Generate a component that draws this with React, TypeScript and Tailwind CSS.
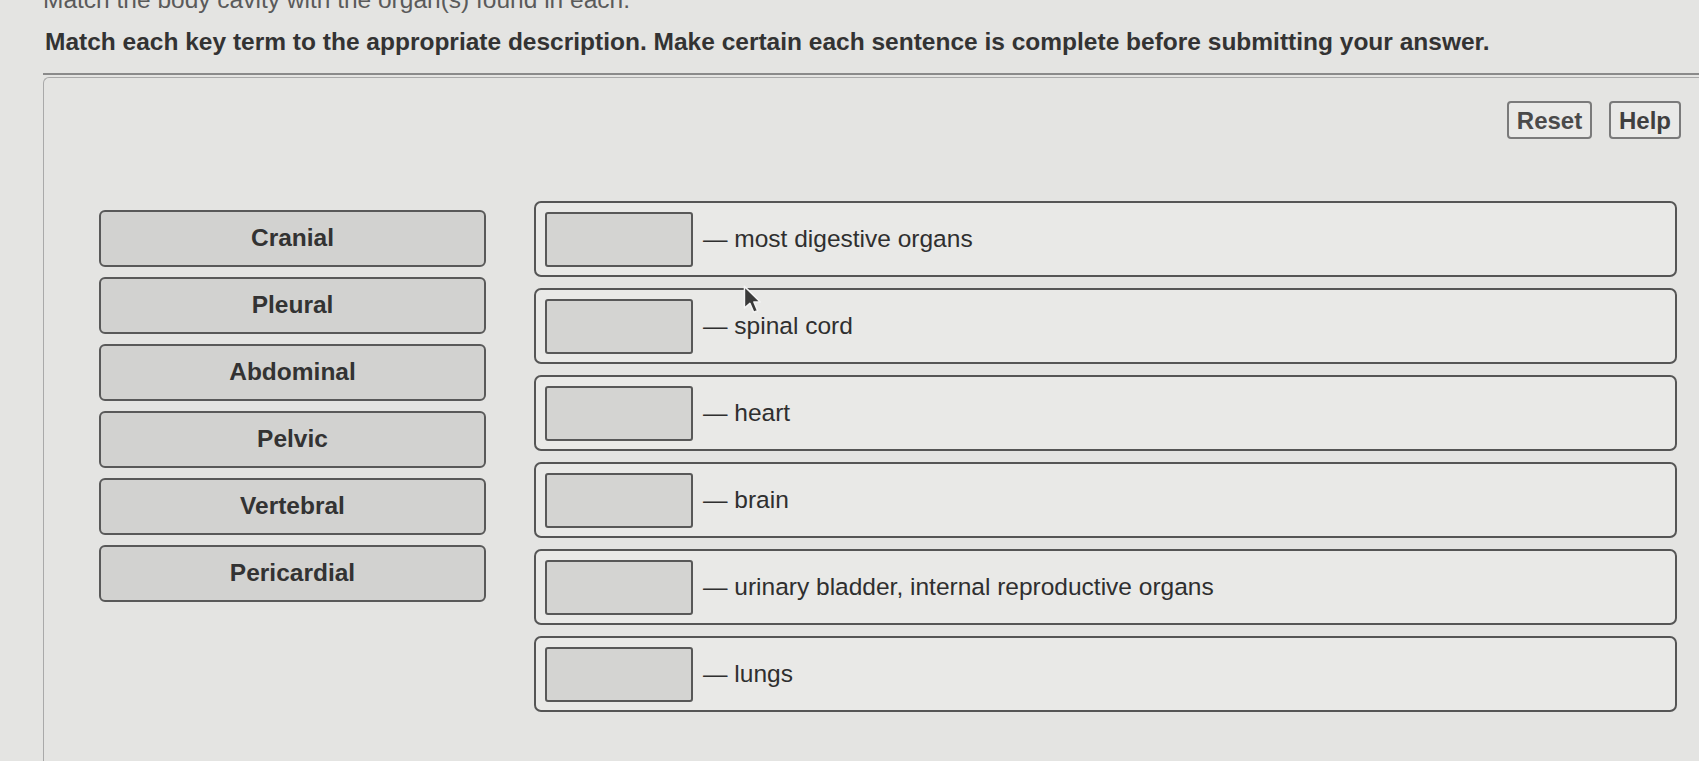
const terms = ["Cranial", "Pleural", "Abdominal", "Pelvic", "Vertebral", "Pericardial"];

const descriptions = [
  "most digestive organs",
  "spinal cord",
  "heart",
  "brain",
  "urinary bladder, internal reproductive organs",
  "lungs",
];

function Pointer() {
  return (
    <svg
      className="absolute left-[743px] top-[285px]"
      width="22"
      height="30"
      viewBox="0 0 16 22"
    >
      <path
        d="M1 1 L1 17 L5 13.5 L7.8 20 L10.6 18.8 L7.9 12.5 L12.6 12.5 Z"
        fill="#3a3a3a"
        stroke="#f4f4f4"
        strokeWidth="1.1"
        strokeLinejoin="round"
      />
    </svg>
  );
}

export default function App() {
  return (
    <div className="relative h-[761px] w-[1699px] overflow-hidden bg-[#e4e4e2] font-['Liberation_Sans',Arial,sans-serif]">
      <p className="ml-[43px] mt-[-12px] whitespace-nowrap text-[24.5px] leading-none text-[#5a5a5a]">
        Match the body cavity with the organ(s) found in each.
      </p>
      <h2 className="ml-[45px] mt-[17px] whitespace-nowrap text-[24.5px] font-bold leading-none text-[#333]">
        Match each key term to the appropriate description. Make certain each sentence is complete before submitting your answer.
      </h2>
      <div className="ml-[43px] mt-[19px] h-[2px] bg-[#8a8a8a]" />

      <div className="ml-[43px] mt-[2px] h-[700px] rounded-tl-[6px] border-l border-t border-[#a9a9a9] pr-[18px] pt-[23px]">
        <div className="flex justify-end gap-[17px]">
          <button className="h-[38px] w-[85px] rounded-[4px] border-2 border-[#7a7a7a] bg-[#e9e9e7] text-[24px] font-bold text-[#4a4a4a]">
            Reset
          </button>
          <button className="h-[38px] w-[72px] rounded-[4px] border-2 border-[#7a7a7a] bg-[#e9e9e7] text-[24px] font-bold text-[#3f3f3f]">
            Help
          </button>
        </div>

        <div className="mt-[62px] flex items-start gap-[48px] pl-[55px]">
          {/* draggable terms */}
          <div className="mt-[9px] flex w-[387px] flex-col gap-[10px]">
            {terms.map((t) => (
              <div
                key={t}
                className="flex h-[57px] items-center justify-center rounded-[6px] border-2 border-[#595959] bg-[#d2d2d0] text-[24.5px] font-bold text-[#333]"
              >
                {t}
              </div>
            ))}
          </div>

          {/* drop targets */}
          <div className="flex w-[1143px] flex-col gap-[11px]">
            {descriptions.map((d) => (
              <div
                key={d}
                className="flex h-[76px] items-center rounded-[7px] border-2 border-[#555] bg-[#e9e9e7] pl-[9px]"
              >
                <div className="h-[55px] w-[148px] rounded-[3px] border-2 border-[#585858] bg-[#d4d4d2]" />
                <span className="ml-[10px] whitespace-nowrap text-[24.5px] text-[#2f2f2f]">
                  — {d}
                </span>
              </div>
            ))}
          </div>
        </div>
      </div>

      <Pointer />
    </div>
  );
}
